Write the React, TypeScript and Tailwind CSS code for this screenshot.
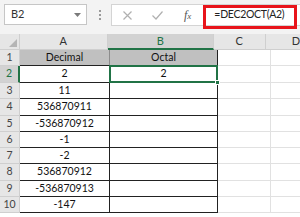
const rows: { n: number; a: string; b: string; h: number }[] = [
  { n: 1, a: 'Decimal', b: 'Octal', h: 16 },
  { n: 2, a: '2', b: '2', h: 17 },
  { n: 3, a: '11', b: '', h: 16 },
  { n: 4, a: '536870911', b: '', h: 17 },
  { n: 5, a: '-536870912', b: '', h: 16 },
  { n: 6, a: '-1', b: '', h: 16 },
  { n: 7, a: '-2', b: '', h: 16 },
  { n: 8, a: '536870912', b: '', h: 17 },
  { n: 9, a: '-536870913', b: '', h: 16 },
  { n: 10, a: '-147', b: '', h: 16 },
]

function FormulaBar() {
  return (
    <div className="relative flex h-[34px] items-start bg-[#f3f3f3] pt-[4px]">
      <div className="ml-[4px] flex h-[21px] w-[83px] items-center justify-between border border-[#c6c6c6] bg-white pl-[6px] pr-[5px]">
        <span className="text-[11px] text-[#333]">B2</span>
        <svg width="7" height="4" viewBox="0 0 7 4">
          <path d="M0 0 H7 L3.5 4 Z" fill="#7a7a7a" />
        </svg>
      </div>
      <div className="ml-[12px] mt-[6px] flex flex-col gap-[2px]">
        <span className="h-[2px] w-[2px] bg-[#9a9a9a]" />
        <span className="h-[2px] w-[2px] bg-[#9a9a9a]" />
        <span className="h-[2px] w-[2px] bg-[#9a9a9a]" />
      </div>
      <div className="ml-[10px] flex h-[22px] flex-1 items-center border border-r-0 border-[#d4d4d4] bg-white">
        <svg className="ml-[11px]" width="9" height="9" viewBox="0 0 9 9">
          <path d="M0.5 0.5 L8.5 8.5 M8.5 0.5 L0.5 8.5" stroke="#b0b0b0" strokeWidth="1.2" />
        </svg>
        <svg className="ml-[20px]" width="11" height="9" viewBox="0 0 11 9">
          <path d="M0.5 4.5 L4 8 L10.5 0.5" stroke="#b0b0b0" strokeWidth="1.2" fill="none" />
        </svg>
        <span className="ml-[21px] font-['Liberation_Serif',serif] text-[12px] italic text-[#555]">
          f<span className="text-[9px]">x</span>
        </span>
        <span className="ml-[23px] text-[10.5px] tracking-[-0.3px] text-[#222]">=DEC2OCT(A2)</span>
      </div>
      <div className="absolute left-[203px] top-[5px] h-[24px] w-[94px] border-[3px] border-[#e8141b]" />
    </div>
  )
}

function HeaderRow() {
  return (
    <div className="flex h-[16px] text-[11px]">
      <div className="relative w-[20px] border-b border-r border-[#cfcfcf] bg-[#e6e6e6]">
        <svg className="absolute bottom-[2px] right-[2px]" width="8" height="8" viewBox="0 0 8 8">
          <path d="M8 0 V8 H0 Z" fill="#b5b5b5" />
        </svg>
      </div>
      <div className="flex w-[90px] items-center justify-center border-b border-r border-[#cfcfcf] bg-[#e6e6e6] text-[#333]">A</div>
      <div className="flex w-[108px] items-center justify-center border-b-2 border-r border-b-[#217346] border-r-[#cfcfcf] bg-[#d2d2d2] text-[#217346]">B</div>
      <div className="flex w-[53px] items-center justify-center border-b border-r border-[#cfcfcf] bg-[#e6e6e6] text-[#333]">C</div>
      <div className="flex flex-1 items-center justify-start border-b border-[#cfcfcf] bg-[#e6e6e6] pl-[26px] text-[#333]">D</div>
    </div>
  )
}

export default function App() {
  return (
    <div className="relative h-[217px] w-[300px] overflow-hidden bg-white font-['Lato',sans-serif]">
      <FormulaBar />
      <HeaderRow />
      {rows.map((r) => {
        const sel = r.n === 2
        const head = r.n === 1
        return (
          <div key={r.n} className="flex text-[10.5px]" style={{ height: r.h }}>
            <div
              className={
                sel
                  ? 'flex w-[20px] items-center justify-center border-b border-r-2 border-b-[#cfcfcf] border-r-[#217346] bg-[#d2d2d2] text-[#217346]'
                  : 'flex w-[20px] items-center justify-center border-b border-r border-[#cfcfcf] bg-[#e6e6e6] text-[#444]'
              }
            >
              {r.n}
            </div>
            <div
              className={
                head
                  ? 'flex w-[90px] items-center justify-center border-b border-r border-b-[#222] border-r-[#8c8c8c] bg-[#c0c0c0] text-[#111]'
                  : 'flex w-[90px] items-center justify-center border-b border-r border-[#222] text-[#111]'
              }
            >
              {r.a}
            </div>
            <div
              className={
                head
                  ? 'flex w-[108px] items-center justify-center border-b border-r border-[#222] bg-[#c0c0c0] text-[#111]'
                  : sel
                    ? 'relative -ml-px -mt-px flex w-[109px] items-center justify-center border-2 border-[#217346] text-[#111]'
                    : 'flex w-[108px] items-center justify-center border-b border-r border-[#222] text-[#111]'
              }
              style={sel ? { height: r.h + 1 } : undefined}
            >
              {r.b}
              {sel && (
                <span className="absolute -bottom-[4px] -right-[4px] h-[5px] w-[5px] border border-white bg-[#217346]" />
              )}
            </div>
            <div className="w-[53px] border-b border-r border-[#e1e1e1]" />
            <div className="flex-1 border-b border-[#e1e1e1]" />
          </div>
        )
      })}
    </div>
  )
}
